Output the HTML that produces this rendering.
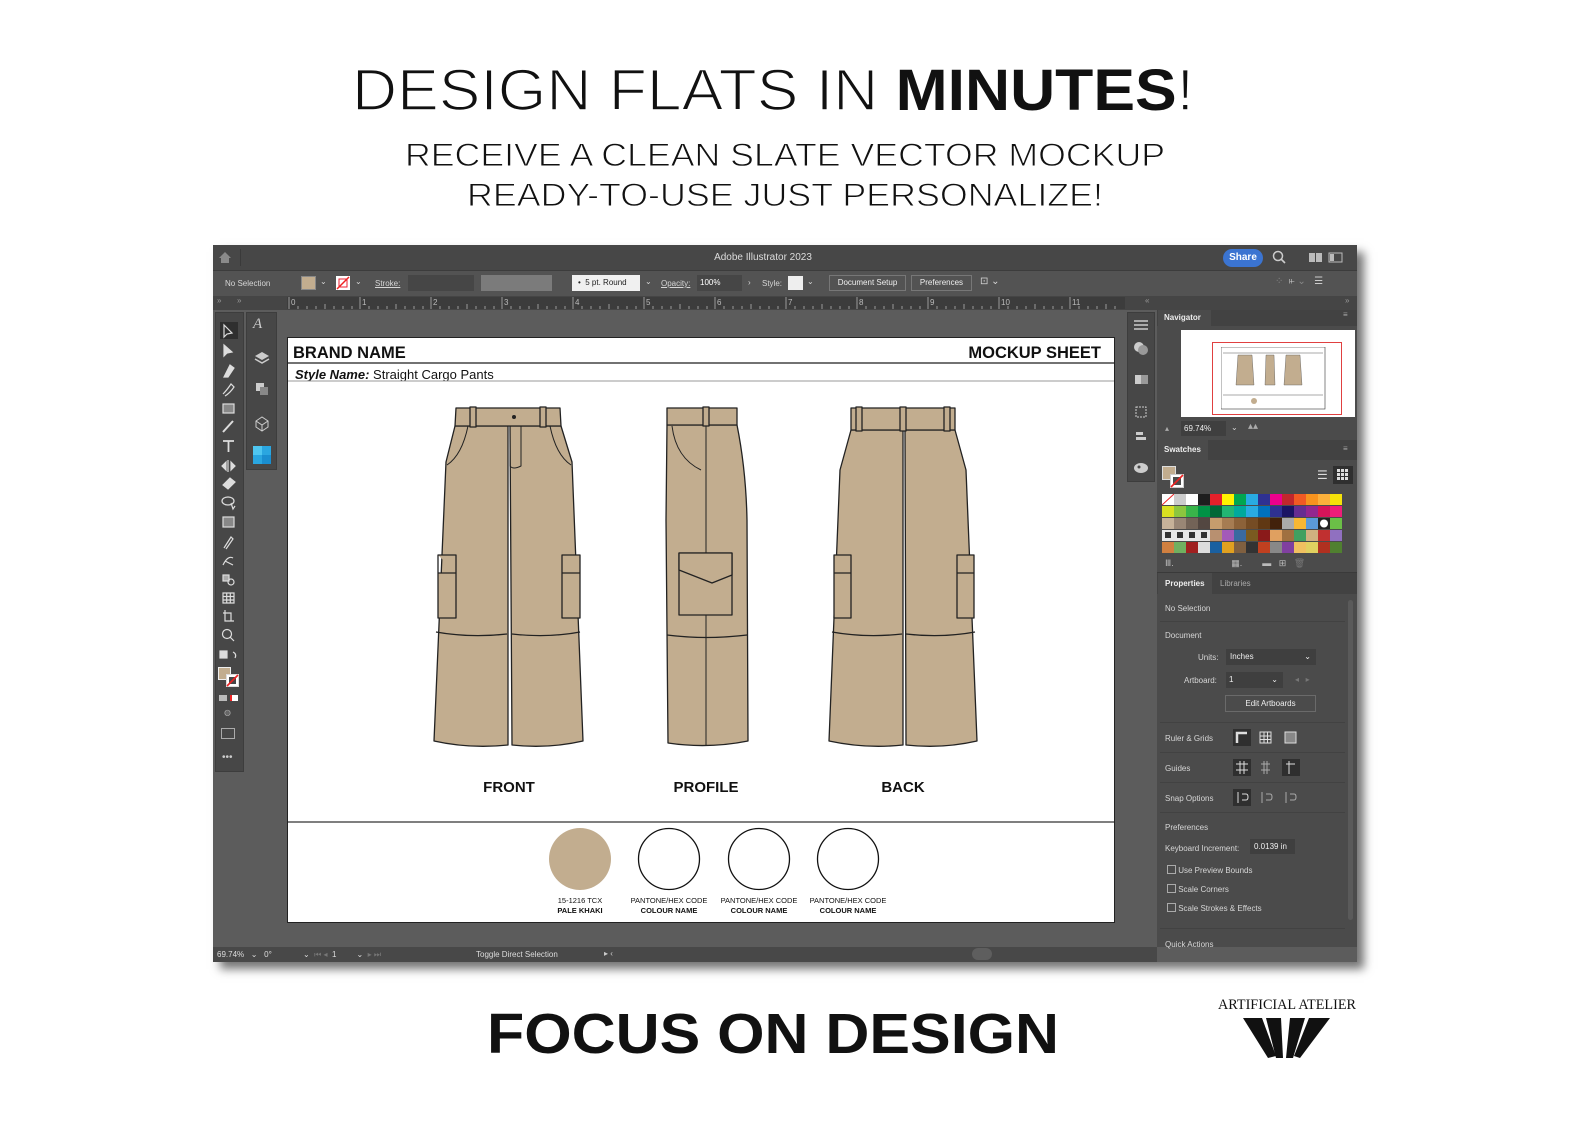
<!DOCTYPE html>
<html><head><meta charset="utf-8">
<style>
*{margin:0;padding:0;box-sizing:border-box}
body{width:1588px;height:1123px;background:#fff;position:relative;overflow:hidden;font-family:"Liberation Sans",sans-serif}
.a{position:absolute}
.ui{font-family:"Liberation Sans",sans-serif;font-size:8px;color:#d6d6d6;white-space:nowrap}
</style></head><body>

<svg class="a" style="left:0;top:0" width="1588" height="230">
<text x="773" y="110" text-anchor="middle" font-family="Liberation Sans" font-size="58" fill="#111" textLength="842" lengthAdjust="spacingAndGlyphs"><tspan stroke="#fff" stroke-width="1.6">DESIGN FLATS IN </tspan><tspan font-weight="bold">MINUTES</tspan><tspan stroke="#fff" stroke-width="1.6">!</tspan></text>
<text x="785" y="166" text-anchor="middle" font-family="Liberation Sans" font-size="32" fill="#111" stroke="#fff" stroke-width="0.9" textLength="760" lengthAdjust="spacingAndGlyphs">RECEIVE A CLEAN SLATE VECTOR MOCKUP</text>
<text x="785" y="206" text-anchor="middle" font-family="Liberation Sans" font-size="32" fill="#111" stroke="#fff" stroke-width="0.9" textLength="636" lengthAdjust="spacingAndGlyphs">READY-TO-USE JUST PERSONALIZE!</text>
</svg>

<!-- Illustrator window -->
<div class="a" style="left:213px;top:245px;width:1144px;height:717px;background:#5c5c5c;box-shadow:7px 7px 9px rgba(0,0,0,.55)"></div>
<div class="a" style="left:213px;top:245px;width:1144px;height:25px;background:#474747"></div>
<div class="a ui" style="left:0;width:1526px;top:252px;text-align:center;font-size:10px;color:#ddd">Adobe Illustrator 2023</div>
<svg class="a" style="left:218px;top:251px" width="14" height="13"><path d="M1 7 L7 1 L13 7 L11 7 L11 12 L3 12 L3 7Z" fill="#8a8a8a"/></svg>
<div class="a" style="left:240px;top:249px;width:1px;height:17px;background:#3a3a3a"></div>
<div class="a ui" style="left:1223px;top:249px;width:40px;height:18px;border-radius:9px;background:#3b74d1;color:#fff;font-size:10px;font-weight:bold;text-align:center;line-height:18px">Share</div>
<svg class="a" style="left:1272px;top:250px" width="80" height="16"><circle cx="6" cy="6" r="4.5" stroke="#ccc" stroke-width="1.5" fill="none"/><path d="M9 9 L13 13" stroke="#ccc" stroke-width="1.6"/><rect x="37" y="3" width="13" height="9" fill="#bbb"/><rect x="43" y="3" width="1" height="9" fill="#474747"/><rect x="57" y="3" width="13" height="9" fill="none" stroke="#bbb"/><rect x="58" y="4" width="4" height="7" fill="#bbb"/></svg>

<div class="a" style="left:213px;top:270px;width:1144px;height:26px;background:#535353;border-top:1px solid #3c3c3c"></div>
<div class="a ui" style="left:225px;top:279px">No Selection</div>
<div class="a" style="left:301px;top:276px;width:15px;height:14px;background:#c2ad8f;border:1px solid #888"></div>
<div class="a ui" style="left:320px;top:277px">⌄</div>
<svg class="a" style="left:336px;top:276px" width="14" height="14"><rect x="0" y="0" width="14" height="14" fill="#fff"/><rect x="3" y="3" width="8" height="8" fill="none" stroke="#e23"/><path d="M1 13 L13 1" stroke="#e22" stroke-width="1.5"/></svg>
<div class="a ui" style="left:355px;top:277px">⌄</div>
<div class="a ui" style="left:375px;top:279px;text-decoration:underline">Stroke:</div>
<div class="a" style="left:408px;top:275px;width:66px;height:16px;background:#464646"></div>
<div class="a" style="left:481px;top:275px;width:71px;height:16px;background:#7b7b7b"></div>
<div class="a ui" style="left:572px;top:275px;width:68px;height:16px;background:#f0f0f0;color:#222;line-height:16px;padding-left:6px">•&nbsp; 5 pt. Round</div>
<div class="a ui" style="left:645px;top:277px">⌄</div>
<div class="a ui" style="left:661px;top:279px;text-decoration:underline">Opacity:</div>
<div class="a ui" style="left:697px;top:275px;width:45px;height:16px;background:#464646;line-height:16px;padding-left:3px;color:#fff">100%</div>
<div class="a ui" style="left:748px;top:278px">›</div>
<div class="a ui" style="left:762px;top:279px">Style:</div>
<div class="a" style="left:788px;top:276px;width:15px;height:14px;background:#eee"></div>
<div class="a ui" style="left:807px;top:277px">⌄</div>
<div class="a ui" style="left:829px;top:275px;width:77px;height:16px;border:1px solid #777;line-height:14px;text-align:center;color:#eee">Document Setup</div>
<div class="a ui" style="left:911px;top:275px;width:61px;height:16px;border:1px solid #777;line-height:14px;text-align:center;color:#eee">Preferences</div>
<div class="a ui" style="left:980px;top:276px;font-size:10px">⊡ ⌄</div>
<div class="a ui" style="left:1275px;top:276px;font-size:10px;color:#888">⁘ &nbsp;<span style="color:#ccc">⫦</span> ⌄ &nbsp;&nbsp;<span style="color:#ccc">☰</span></div>

<div class="a" style="left:213px;top:296px;width:1144px;height:14px;background:#454545"></div>
<div class="a" style="left:287px;top:297px;width:838px;height:12px;background:#3c3c3c"></div>
<svg class="a" style="left:287px;top:297px" width="838" height="12">
<g stroke="#9a9a9a" stroke-width="1">
<path d="M2 0V12M73 0V12M144 0V12M215 0V12M286 0V12M357 0V12M428 0V12M499 0V12M570 0V12M641 0V12M712 0V12M783 0V12"/>
<path d="M11 9V12M20 9V12M29 9V12M38 7V12M47 9V12M56 9V12M65 9V12M82 9V12M91 9V12M100 9V12M109 7V12M118 9V12M127 9V12M136 9V12M153 9V12M162 9V12M171 9V12M180 7V12M189 9V12M198 9V12M207 9V12M224 9V12M233 9V12M242 9V12M251 7V12M260 9V12M269 9V12M278 9V12M295 9V12M304 9V12M313 9V12M322 7V12M331 9V12M340 9V12M349 9V12M366 9V12M375 9V12M384 9V12M393 7V12M402 9V12M411 9V12M420 9V12M437 9V12M446 9V12M455 9V12M464 7V12M473 9V12M482 9V12M491 9V12M508 9V12M517 9V12M526 9V12M535 7V12M544 9V12M553 9V12M562 9V12M579 9V12M588 9V12M597 9V12M606 7V12M615 9V12M624 9V12M633 9V12M650 9V12M659 9V12M668 9V12M677 7V12M686 9V12M695 9V12M704 9V12M721 9V12M730 9V12M739 9V12M748 7V12M757 9V12M766 9V12M775 9V12M792 9V12M801 9V12M810 9V12M819 7V12M828 9V12"/>
</g>
<g fill="#bbb" font-family="Liberation Sans" font-size="8"><text x="4" y="8">0</text><text x="75" y="8">1</text><text x="146" y="8">2</text><text x="217" y="8">3</text><text x="288" y="8">4</text><text x="359" y="8">5</text><text x="430" y="8">6</text><text x="501" y="8">7</text><text x="572" y="8">8</text><text x="643" y="8">9</text><text x="714" y="8">10</text><text x="785" y="8">11</text></g>
</svg>
<div class="a ui" style="left:217px;top:296px;color:#999">»&nbsp;&nbsp;&nbsp;&nbsp;&nbsp;&nbsp;&nbsp;»</div>
<div class="a ui" style="left:1145px;top:296px;color:#999">«</div>
<div class="a ui" style="left:1345px;top:296px;color:#999">»</div>

<div class="a" style="left:215px;top:312px;width:29px;height:460px;background:#474747;border:1px solid #3d3d3d"></div>
<div class="a" style="left:220px;top:322px;width:18px;height:17px;background:#2f2f2f"></div>
<svg class="a" style="left:215px;top:320px" width="29" height="450" fill="none" stroke="#ddd" stroke-width="1.2">
<path d="M9 5 L9 17 L12 14 L17 13Z"/>
<path d="M9 25 L9 36 L12 33 L17 32Z" fill="#ddd"/>
<path d="M9 57 L15 45 L19 48 L13 57Z" fill="#ddd"/>
<path d="M8 74 Q12 70 16 64 L19 67 Q15 73 10 76" />
<rect x="8" y="84" width="11" height="9" fill="#888"/>
<path d="M8 112 L18 101" stroke-width="2"/>
<path d="M8 121 H19 M13.5 121 V132" stroke-width="1.8"/>
<path d="M13 140 V152 M11 142 L7 146 L11 150Z M16 142 L20 146 L16 150Z" fill="#ddd"/>
<path d="M8 165 L15 158 L20 162 L13 169Z" fill="#ddd"/>
<ellipse cx="13" cy="181" rx="6" ry="4"/><path d="M16 183 L18 189 L20 186"/>
<rect x="8" y="197" width="11" height="10" fill="#888"/>
<path d="M9 228 L16 217 L18 219 L11 229"/>
<path d="M8 245 Q13 235 18 238 M10 241 Q14 243 18 245"/>
<rect x="8" y="255" width="6" height="6" fill="#aaa"/><circle cx="16" cy="262" r="3"/>
<path d="M8 273 H19 V283 H8Z M8 276.5H19 M8 280H19 M11.7 273V283 M15.3 273V283"/>
<path d="M10 290 V301 H19 M8 293 H16 V301"/>
<circle cx="12" cy="314" r="4.5"/><path d="M15 317 L19 321"/>
<rect x="5" y="331" width="7" height="7" fill="#ddd"/><path d="M18 332 Q22 334 20 338"/>
</svg>
<div class="a" style="left:218px;top:667px;width:13px;height:13px;background:#c2ad8f;border:1px solid #eee"></div>
<svg class="a" style="left:226px;top:674px" width="13" height="13"><rect x="0.5" y="0.5" width="12" height="12" fill="#fff" stroke="#ddd"/><rect x="3" y="3" width="7" height="7" fill="#474747"/><path d="M1 12 L12 1" stroke="#e22" stroke-width="1.6"/></svg>
<div class="a" style="left:219px;top:695px;width:8px;height:6px;background:#bbb"></div><div class="a" style="left:230px;top:695px;width:8px;height:6px;background:#fff;border-left:2px solid #e22"></div>
<div class="a ui" style="left:224px;top:708px;color:#aaa">◍</div>
<div class="a" style="left:221px;top:728px;width:14px;height:11px;border:1px solid #aaa"></div>
<div class="a ui" style="left:222px;top:752px;font-size:10px;color:#ccc">•••</div>

<div class="a" style="left:246px;top:312px;width:31px;height:158px;background:#474747;border:1px solid #3d3d3d"></div>
<div class="a" style="left:253px;top:316px;font-family:'Liberation Serif',serif;font-style:italic;font-size:15px;color:#ccc">A</div>
<svg class="a" style="left:246px;top:345px" width="31" height="125" fill="#ccc"><path d="M9 11 L16 7 L23 11 L16 15Z"/><path d="M9 14 L16 18 L23 14" fill="none" stroke="#ccc" stroke-width="1.5"/><rect x="10" y="38" width="8" height="8"/><rect x="14" y="42" width="8" height="8" fill="#888"/><path d="M10 76 L16 72 L22 76 V82 L16 86 L10 82Z M10 76 L16 80 L22 76 M16 80V86" fill="none" stroke="#ccc"/><rect x="7" y="101" width="18" height="18" fill="#2aa6e0"/><rect x="7" y="101" width="9" height="9" fill="#4fc6f0"/><rect x="16" y="110" width="9" height="9" fill="#1a8ed0"/></svg>

<div class="a" style="left:287px;top:337px;width:828px;height:586px;background:#fff;border:1px solid #222"></div>
<svg class="a" style="left:0;top:0" width="1588" height="1123">
<g font-family="Liberation Sans" fill="#111">
<text x="293" y="358" font-size="16.5" font-weight="bold">BRAND NAME</text>
<text x="1101" y="358" font-size="16.5" font-weight="bold" text-anchor="end">MOCKUP SHEET</text>
<text x="295" y="379" font-size="13"><tspan font-weight="bold" font-style="italic">Style Name:</tspan> Straight Cargo Pants</text>
<text x="509" y="792" font-size="15" font-weight="bold" text-anchor="middle">FRONT</text>
<text x="706" y="792" font-size="15" font-weight="bold" text-anchor="middle">PROFILE</text>
<text x="903" y="792" font-size="15" font-weight="bold" text-anchor="middle">BACK</text>
<g font-size="7.5" text-anchor="middle">
<text x="580" y="903">15-1216 TCX</text><text x="580" y="913" font-weight="bold">PALE KHAKI</text>
<text x="669" y="903">PANTONE/HEX CODE</text><text x="669" y="913" font-weight="bold">COLOUR NAME</text>
<text x="759" y="903">PANTONE/HEX CODE</text><text x="759" y="913" font-weight="bold">COLOUR NAME</text>
<text x="848" y="903">PANTONE/HEX CODE</text><text x="848" y="913" font-weight="bold">COLOUR NAME</text>
</g></g>
<path d="M288 363 H1114" stroke="#444" stroke-width="1.5"/>
<path d="M288 381 H1114" stroke="#999" stroke-width="1"/>
<path d="M288 822 H1114" stroke="#333" stroke-width="1.3"/>
<circle cx="580" cy="859" r="31" fill="#c2ad8f"/>
<circle cx="669" cy="859" r="30.5" fill="none" stroke="#111" stroke-width="1.3"/>
<circle cx="759" cy="859" r="30.5" fill="none" stroke="#111" stroke-width="1.3"/>
<circle cx="848" cy="859" r="30.5" fill="none" stroke="#111" stroke-width="1.3"/>

<g fill="#c2ad8f" stroke="#222" stroke-width="1.3" stroke-linejoin="round">
<path d="M455 426 L508 426 L508 745 Q470 749 434 741 L446 462Z"/>
<path d="M510 426 L561 426 L572 462 L583 741 Q548 749 512 745 Z"/>
<path d="M456 408 L560 408 L561 426 L455 426Z"/>
<path d="M470 407 h6 v20 h-6Z M540 407 h6 v20 h-6Z"/>
<path d="M438 555 h18 v63 h-18Z M438 555 v18 h18" />
<path d="M562 555 h18 v63 h-18Z M562 573 h18"/>
<path d="M436 632 Q470 638 507 634 M512 634 Q548 638 580 632" fill="none"/>
<path d="M468 426 Q462 455 447 465 M550 426 Q556 455 571 465 M510 426 V466 Q513 470 521 466 V426" fill="none" stroke-width="1"/>
<path d="M667 425 L737 425 Q746 470 747 520 L748 741 Q708 749 668 743 L666 520Z"/>
<path d="M667 408 L737 408 L737 425 L667 425Z"/>
<path d="M703 407 h6 v19 h-6Z"/>
<path d="M706 426 V746 M672 426 Q676 458 701 470" fill="none" stroke-width="1"/>
<path d="M679 553 h53 v62 h-53Z"/>
<path d="M679 553 L732 553 L732 575 L712 583 L679 570Z"/>
<path d="M667 635 Q706 640 747 635" fill="none"/>
<path d="M851 430 L840 470 L829 741 Q866 749 903 745 L903 430Z"/>
<path d="M905 430 L955 430 L966 470 L977 741 Q942 749 906 745 Z"/>
<path d="M851 408 L955 408 L955 430 L851 430Z"/>
<path d="M856 407 h6 v24 h-6Z M900 407 h6 v24 h-6Z M944 407 h6 v24 h-6Z"/>
<path d="M834 555 h17 v63 h-17Z M834 573 h17"/>
<path d="M957 555 h17 v63 h-17Z M957 573 h17"/>
<path d="M832 632 Q866 638 902 634 M906 634 Q942 638 975 632" fill="none"/>
</g>
<g fill="#222"><circle cx="514" cy="417" r="2"/></g>
</svg>

<div class="a" style="left:1127px;top:312px;width:28px;height:170px;background:#474747;border:1px solid #3d3d3d"></div>
<svg class="a" style="left:1127px;top:312px" width="28" height="170" fill="#ccc"><path d="M7 9h14M7 13h14M7 17h14" stroke="#ccc" stroke-width="1.5"/><circle cx="12" cy="35" r="5"/><circle cx="16" cy="38" r="5" fill="#999"/><rect x="8" y="63" width="13" height="9" fill="#999"/><rect x="8" y="63" width="6" height="9"/><rect x="9" y="95" width="10" height="10" fill="none" stroke="#ccc" stroke-dasharray="2 1"/><path d="M9 117v13M9 120h7v3h-7M9 125h10v3h-10"/><ellipse cx="14" cy="156" rx="7" ry="5"/><circle cx="12" cy="155" r="1.5" fill="#474747"/></svg>

<div class="a" style="left:1157px;top:310px;width:200px;height:637px;background:#4b4b4b"></div>
<div class="a" style="left:1157px;top:310px;width:200px;height:16px;background:#424242"></div>
<div class="a ui" style="left:1158px;top:310px;width:53px;height:16px;background:#4b4b4b;font-weight:bold;line-height:16px;padding-left:6px;color:#eee">Navigator</div>
<div class="a ui" style="left:1343px;top:310px;color:#aaa">≡</div>
<div class="a" style="left:1181px;top:330px;width:174px;height:87px;background:#fff"></div>
<div class="a" style="left:1212px;top:342px;width:130px;height:73px;border:1.5px solid #e04040"></div>
<svg class="a" style="left:1221px;top:347px" width="106" height="65"><rect x="0" y="0" width="104" height="62" fill="#fff" stroke="#333" stroke-width="0.6"/><g fill="#c2ad8f" stroke="#555" stroke-width="0.4"><path d="M17 8h14l2 30h-18z"/><path d="M45 8h8l1 30h-10z"/><path d="M65 8h14l2 30h-18z"/></g><circle cx="33" cy="54" r="3" fill="#c2ad8f"/><path d="M2 6h100M2 48h100" stroke="#555" stroke-width="0.5"/></svg>
<div class="a ui" style="left:1165px;top:424px;color:#aaa">▴</div>
<div class="a ui" style="left:1181px;top:421px;width:45px;height:15px;background:#3f3f3f;line-height:15px;padding-left:3px;color:#eee">69.74%</div>
<div class="a ui" style="left:1231px;top:423px">⌄</div>
<div class="a ui" style="left:1248px;top:421px;font-size:10px;color:#aaa">▴▴</div>
<div class="a" style="left:1157px;top:440px;width:200px;height:20px;background:#424242"></div>
<div class="a ui" style="left:1158px;top:440px;width:50px;height:20px;background:#4b4b4b;font-weight:bold;line-height:20px;padding-left:6px;color:#eee">Swatches</div>
<div class="a ui" style="left:1343px;top:444px;color:#aaa">≡</div>
<div class="a" style="left:1162px;top:466px;width:14px;height:14px;background:#c2ad8f;border:1px solid #ddd"></div>
<svg class="a" style="left:1170px;top:474px" width="14" height="14"><rect x="0.5" y="0.5" width="13" height="13" fill="#fff" stroke="#ccc"/><rect x="3" y="3" width="8" height="8" fill="#4b4b4b"/><path d="M1 13L13 1" stroke="#e22" stroke-width="1.6"/></svg>
<div class="a ui" style="left:1317px;top:468px;font-size:12px;color:#ddd">☰</div>
<div class="a" style="left:1333px;top:466px;width:20px;height:18px;background:#2f2f2f"></div>
<svg class="a" style="left:1337px;top:469px" width="12" height="12" fill="#ddd"><rect x="0" y="0" width="3" height="3"/><rect x="4" y="0" width="3" height="3"/><rect x="8" y="0" width="3" height="3"/><rect x="0" y="4" width="3" height="3"/><rect x="4" y="4" width="3" height="3"/><rect x="8" y="4" width="3" height="3"/><rect x="0" y="8" width="3" height="3"/><rect x="4" y="8" width="3" height="3"/><rect x="8" y="8" width="3" height="3"/></svg>
<svg class="a" style="left:1162px;top:494px" width="180" height="59">
<g>
<rect x="0" y="0" width="12" height="11" fill="#fff"/><path d="M0 11L12 0" stroke="#e22"/>
<rect x="12" y="0" width="12" height="11" fill="#ccc"/><rect x="24" y="0" width="12" height="11" fill="#fff"/><rect x="36" y="0" width="12" height="11" fill="#1e1e1e"/><rect x="48" y="0" width="12" height="11" fill="#e4202a"/><rect x="60" y="0" width="12" height="11" fill="#fff200"/><rect x="72" y="0" width="12" height="11" fill="#00a651"/><rect x="84" y="0" width="12" height="11" fill="#29abe2"/><rect x="96" y="0" width="12" height="11" fill="#2e3192"/><rect x="108" y="0" width="12" height="11" fill="#ec008c"/><rect x="120" y="0" width="12" height="11" fill="#c1272d"/><rect x="132" y="0" width="12" height="11" fill="#f15a24"/><rect x="144" y="0" width="12" height="11" fill="#f7931e"/><rect x="156" y="0" width="12" height="11" fill="#fbb03b"/><rect x="168" y="0" width="12" height="11" fill="#f5e20a"/>
<rect x="0" y="12" width="12" height="11" fill="#d9e021"/><rect x="12" y="12" width="12" height="11" fill="#8cc63f"/><rect x="24" y="12" width="12" height="11" fill="#39b54a"/><rect x="36" y="12" width="12" height="11" fill="#009245"/><rect x="48" y="12" width="12" height="11" fill="#006837"/><rect x="60" y="12" width="12" height="11" fill="#22b573"/><rect x="72" y="12" width="12" height="11" fill="#00a99d"/><rect x="84" y="12" width="12" height="11" fill="#29abe2"/><rect x="96" y="12" width="12" height="11" fill="#0071bc"/><rect x="108" y="12" width="12" height="11" fill="#2e3192"/><rect x="120" y="12" width="12" height="11" fill="#1b1464"/><rect x="132" y="12" width="12" height="11" fill="#662d91"/><rect x="144" y="12" width="12" height="11" fill="#93278f"/><rect x="156" y="12" width="12" height="11" fill="#d4145a"/><rect x="168" y="12" width="12" height="11" fill="#ed1e79"/>
<rect x="0" y="24" width="12" height="11" fill="#c7b299"/><rect x="12" y="24" width="12" height="11" fill="#998675"/><rect x="24" y="24" width="12" height="11" fill="#736357"/><rect x="36" y="24" width="12" height="11" fill="#534741"/><rect x="48" y="24" width="12" height="11" fill="#c69c6d"/><rect x="60" y="24" width="12" height="11" fill="#a67c52"/><rect x="72" y="24" width="12" height="11" fill="#8c6239"/><rect x="84" y="24" width="12" height="11" fill="#754c24"/><rect x="96" y="24" width="12" height="11" fill="#603813"/><rect x="108" y="24" width="12" height="11" fill="#42210b"/><rect x="120" y="24" width="12" height="11" fill="#aaa"/><rect x="132" y="24" width="12" height="11" fill="#f7b733"/><rect x="144" y="24" width="12" height="11" fill="#5a9ad8"/><rect x="156" y="24" width="12" height="11" fill="#222"/><circle cx="162" cy="29.5" r="4" fill="#fff"/><rect x="168" y="24" width="12" height="11" fill="#6bbf47"/>
<rect x="0" y="36" width="48" height="11" fill="#e8e8e8"/><rect x="3" y="38" width="6" height="6" fill="#333"/><rect x="15" y="38" width="6" height="6" fill="#333"/><rect x="27" y="38" width="6" height="6" fill="#333"/><rect x="39" y="38" width="6" height="6" fill="#333"/>
<rect x="48" y="36" width="12" height="11" fill="#b89070"/><rect x="60" y="36" width="12" height="11" fill="#a35ab8"/><rect x="72" y="36" width="12" height="11" fill="#3a6aa0"/><rect x="84" y="36" width="12" height="11" fill="#7a5a20"/><rect x="96" y="36" width="12" height="11" fill="#8a1a1a"/><rect x="108" y="36" width="12" height="11" fill="#e0a060"/><rect x="120" y="36" width="12" height="11" fill="#a07040"/><rect x="132" y="36" width="12" height="11" fill="#40a060"/><rect x="144" y="36" width="12" height="11" fill="#d0b080"/><rect x="156" y="36" width="12" height="11" fill="#c03030"/><rect x="168" y="36" width="12" height="11" fill="#9070c0"/>
<rect x="0" y="48" width="12" height="11" fill="#d08040"/><rect x="12" y="48" width="12" height="11" fill="#70b060"/><rect x="24" y="48" width="12" height="11" fill="#a02020"/><rect x="36" y="48" width="12" height="11" fill="#ddd"/><rect x="48" y="48" width="12" height="11" fill="#1a60a0"/><rect x="60" y="48" width="12" height="11" fill="#e0a020"/><rect x="72" y="48" width="12" height="11" fill="#806040"/><rect x="84" y="48" width="12" height="11" fill="#333"/><rect x="96" y="48" width="12" height="11" fill="#c04020"/><rect x="108" y="48" width="12" height="11" fill="#888"/><rect x="120" y="48" width="12" height="11" fill="#8040a0"/><rect x="132" y="48" width="12" height="11" fill="#f0c060"/><rect x="144" y="48" width="12" height="11" fill="#e0d060"/><rect x="156" y="48" width="12" height="11" fill="#b03020"/><rect x="168" y="48" width="12" height="11" fill="#508030"/>
</g></svg>
<div class="a ui" style="left:1165px;top:558px;font-size:9px;color:#bbb">Ⅲ. &nbsp;&nbsp;&nbsp;&nbsp;&nbsp;&nbsp;&nbsp;&nbsp;&nbsp;&nbsp;&nbsp;&nbsp;&nbsp;&nbsp;&nbsp;&nbsp;&nbsp;&nbsp;&nbsp;&nbsp;&nbsp;&nbsp;▦. &nbsp;&nbsp;&nbsp;&nbsp;&nbsp;&nbsp;&nbsp;▬ &nbsp;&nbsp;⊞ &nbsp;&nbsp;<span style="color:#777">🗑</span></div>
<div class="a" style="left:1157px;top:572px;width:200px;height:22px;background:#424242;border-top:1px solid #3a3a3a"></div>
<div class="a ui" style="left:1158px;top:573px;width:54px;height:21px;background:#4b4b4b;font-weight:bold;line-height:21px;padding-left:7px;color:#eee">Properties</div>
<div class="a ui" style="left:1220px;top:579px;color:#aaa">Libraries</div>
<div class="a ui" style="left:1165px;top:604px">No Selection</div>
<div class="a" style="left:1160px;top:621px;width:185px;height:1px;background:#424242"></div>
<div class="a ui" style="left:1165px;top:631px">Document</div>
<div class="a ui" style="left:1198px;top:653px">Units:</div>
<div class="a ui" style="left:1226px;top:649px;width:90px;height:16px;background:#3f3f3f;line-height:16px;padding-left:4px;color:#eee">Inches<span style="float:right;padding-right:5px">⌄</span></div>
<div class="a ui" style="left:1184px;top:676px">Artboard:</div>
<div class="a ui" style="left:1226px;top:672px;width:57px;height:16px;background:#3f3f3f;line-height:16px;padding-left:3px;color:#eee">1<span style="float:right;padding-right:5px">⌄</span></div>
<div class="a ui" style="left:1295px;top:675px;color:#777">◂ &nbsp;&nbsp;▸</div>
<div class="a ui" style="left:1225px;top:695px;width:91px;height:17px;border:1px solid #6a6a6a;line-height:15px;text-align:center;color:#eee">Edit Artboards</div>
<div class="a" style="left:1160px;top:722px;width:185px;height:1px;background:#424242"></div>
<div class="a ui" style="left:1165px;top:734px">Ruler &amp; Grids</div>
<div class="a" style="left:1233px;top:729px;width:18px;height:17px;background:#2f2f2f"></div>
<svg class="a" style="left:1233px;top:729px" width="80" height="80" fill="none" stroke="#ddd">
<path d="M4 14V4H14" stroke-width="2.5"/>
<rect x="27" y="3" width="11" height="11"/><path d="M27 7h11M27 10.5h11M31 3v11M34.5 3v11"/>
<rect x="52" y="3" width="11" height="11" fill="#888"/>
<rect x="0" y="30" width="18" height="17" fill="#2f2f2f" stroke="none"/><path d="M3 35h12M3 41h12M7 32v13M11 32v13"/>
<path d="M28 35h9M28 41h9M31 32v13M34 32v13" stroke="#aaa"/>
<rect x="49" y="30" width="18" height="17" fill="#2f2f2f" stroke="none"/><path d="M53 35h9M56 32v13"/>
<rect x="0" y="60" width="18" height="17" fill="#2f2f2f" stroke="none"/><path d="M5 63v11M9 65h4q2 0 2 3q0 3-2 3h-4"/>
<path d="M29 63v11M33 65h4q2 0 2 3q0 3-2 3h-4" stroke="#aaa"/>
<path d="M53 63v11M57 65h4q2 0 2 3q0 3-2 3h-4" stroke="#aaa"/>
</svg>
<div class="a" style="left:1160px;top:752px;width:185px;height:1px;background:#424242"></div>
<div class="a ui" style="left:1165px;top:764px">Guides</div>
<div class="a" style="left:1160px;top:782px;width:185px;height:1px;background:#424242"></div>
<div class="a ui" style="left:1165px;top:794px">Snap Options</div>
<div class="a" style="left:1160px;top:812px;width:185px;height:1px;background:#424242"></div>
<div class="a ui" style="left:1165px;top:823px">Preferences</div>
<div class="a ui" style="left:1165px;top:844px">Keyboard Increment:</div>
<div class="a ui" style="left:1250px;top:839px;width:45px;height:15px;background:#3f3f3f;line-height:15px;padding-left:4px;color:#eee">0.0139 in</div>
<div class="a ui" style="left:1167px;top:865px"><span style="display:inline-block;width:9px;height:9px;border:1px solid #aaa;vertical-align:-1px"></span> Use Preview Bounds</div>
<div class="a ui" style="left:1167px;top:884px"><span style="display:inline-block;width:9px;height:9px;border:1px solid #aaa;vertical-align:-1px"></span> Scale Corners</div>
<div class="a ui" style="left:1167px;top:903px"><span style="display:inline-block;width:9px;height:9px;border:1px solid #aaa;vertical-align:-1px"></span> Scale Strokes &amp; Effects</div>
<div class="a" style="left:1160px;top:928px;width:185px;height:1px;background:#424242"></div>
<div class="a ui" style="left:1165px;top:940px">Quick Actions</div>
<div class="a" style="left:1348px;top:600px;width:5px;height:320px;background:#5a5a5a;border-radius:3px"></div>

<div class="a" style="left:213px;top:947px;width:944px;height:15px;background:#484848"></div>
<div class="a ui" style="left:217px;top:950px;color:#ddd">69.74% &nbsp;&nbsp;⌄ &nbsp;&nbsp;0° &nbsp;&nbsp;&nbsp;&nbsp;&nbsp;&nbsp;&nbsp;&nbsp;&nbsp;&nbsp;&nbsp;&nbsp;&nbsp;⌄ &nbsp;<span style="color:#777">⏮ ◂</span>&nbsp; 1 &nbsp;&nbsp;&nbsp;&nbsp;&nbsp;&nbsp;&nbsp;&nbsp;⌄ &nbsp;<span style="color:#777">▸ ⏭</span></div>
<div class="a ui" style="left:476px;top:950px;color:#ddd">Toggle Direct Selection</div>
<div class="a ui" style="left:604px;top:949px;color:#ccc">▸ ‹</div>
<div class="a" style="left:972px;top:948px;width:20px;height:12px;border-radius:6px;background:#5e5e5e"></div>

<svg class="a" style="left:0;top:990px" width="1588" height="133">
<text x="773" y="63" text-anchor="middle" font-family="Liberation Sans" font-weight="bold" font-size="57" fill="#111" textLength="572" lengthAdjust="spacingAndGlyphs">FOCUS ON DESIGN</text>
<text x="1287" y="19" text-anchor="middle" font-family="Liberation Serif" font-size="15" fill="#111" textLength="138" lengthAdjust="spacingAndGlyphs">ARTIFICIAL ATELIER</text>
<g fill="#111">
<path d="M1243 28 L1262 28 L1276 66 L1268 68Z"/>
<path d="M1266 28 L1281 28 L1283 68 L1276 68Z"/>
<path d="M1290 28 L1305 28 L1293 68 L1286 68Z"/>
<path d="M1309 28 L1330 28 L1300 68 L1294 66Z"/>
</g>
</svg>
</body></html>
